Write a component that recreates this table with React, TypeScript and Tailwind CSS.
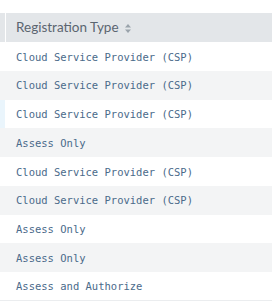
const rows = [
  'Cloud Service Provider (CSP)',
  'Cloud Service Provider (CSP)',
  'Cloud Service Provider (CSP)',
  'Assess Only',
  'Cloud Service Provider (CSP)',
  'Cloud Service Provider (CSP)',
  'Assess Only',
  'Assess Only',
  'Assess and Authorize',
];

export default function App() {
  return (
    <div className="w-[272px] h-[302px] bg-white overflow-hidden pt-[13px]">
      <div className="flex h-[29px] bg-[#e3e6e9]">
        <div className="w-[5px] shrink-0" />
        <div className="w-px bg-white shrink-0" />
        <div className="flex items-center pl-[10px] gap-[6px] font-['Lato',sans-serif] text-[13.5px] text-[#5b6570]">
          <span>Registration Type</span>
          <svg width="6" height="9" viewBox="0 0 6 9" className="mt-px">
            <path d="M0 3.5 L3 0 L6 3.5 Z" fill="#9aa3ab" />
            <path d="M0 5.5 L3 9 L6 5.5 Z" fill="#9aa3ab" />
          </svg>
        </div>
      </div>
      {rows.map((r, i) => (
        <div
          key={i}
          className={`flex h-[28.75px] ${i % 2 === 1 ? 'bg-[#f3f4f5]' : 'bg-white'} ${i === 8 ? 'border-b border-[#ebedef]' : ''}`}
        >
          <div className={`w-[5px] shrink-0 ${i === 2 ? 'bg-[#eaf5fc]' : ''}`} />
          <div className="flex items-center pt-[2px] pl-[11px] font-['DejaVu_Sans_Mono',monospace] text-[10.5px] text-[#4a6a8a]">
            {r}
          </div>
        </div>
      ))}
    </div>
  );
}
